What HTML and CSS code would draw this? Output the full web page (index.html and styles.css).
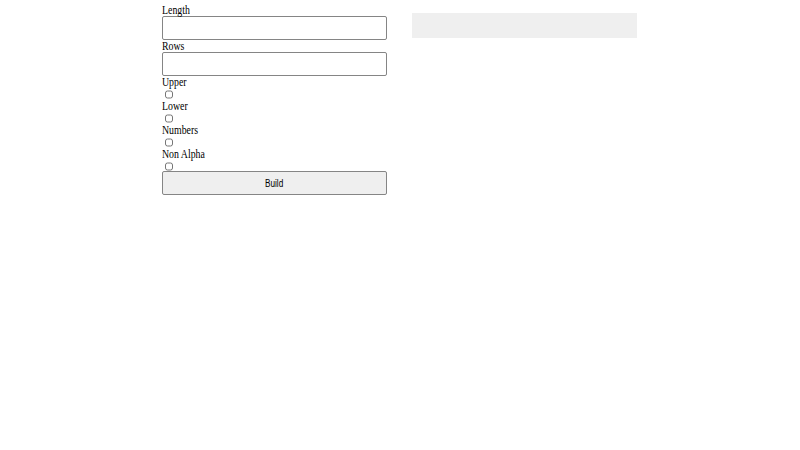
FILE: index.html
```html
<!DOCTYPE html>
<html>
<head>
<meta charset="utf-8">
<link rel="stylesheet" href="styles.css">
</head>
<body>
<div class="page">
  <form class="form">
    <label class="lbl">Length</label>
    <input class="field" type="text">
    <label class="lbl">Rows</label>
    <input class="field" type="text">
    <label class="lbl">Upper</label>
    <input class="check" type="checkbox">
    <label class="lbl">Lower</label>
    <input class="check" type="checkbox">
    <label class="lbl">Numbers</label>
    <input class="check" type="checkbox">
    <label class="lbl">Non Alpha</label>
    <input class="check" type="checkbox">
    <button class="build" type="button"><span class="build-text">Build</span></button>
  </form>
  <pre class="output"></pre>
</div>
</body>
</html>
```

FILE: styles.css
```css
html, body {
  margin: 0;
  padding: 0;
  background: #ffffff;
}
.page {
  width: 476px;
  margin: 0 auto;
  display: flex;
  align-items: flex-start;
  gap: 25px;
  padding-top: 4px;
}
.form {
  width: 225px;
  display: flex;
  flex-direction: column;
  align-items: stretch;
  margin: 0;
}
.lbl {
  font-family: "Liberation Serif", "Times New Roman", serif;
  font-size: 12px;
  line-height: 12px;
  color: #000;
  display: block;
  transform: scaleX(0.82);
  transform-origin: left center;
}
.field {
  box-sizing: border-box;
  height: 24px;
  width: 225px;
  margin: 0;
  border: 1px solid #858585;
  border-radius: 2px;
  background: #fff;
  padding: 0 4px;
}
.check {
  width: 8px;
  height: 9px;
  margin: 2px 0 1px 3px;
  align-self: flex-start;
}
.build {
  box-sizing: border-box;
  height: 24px;
  width: 225px;
  margin: -1px 0 0 0;
  border: 1px solid #858585;
  border-radius: 2px;
  background: #efefef;
  font-family: "Liberation Sans", Arial, sans-serif;
  font-size: 10px;
  color: #000;
}
.build-text {
  display: inline-block;
  transform: scaleX(0.82);
}
.output {
  width: 225px;
  height: 25px;
  margin: 9px 0 0 0;
  background: #efefef;
  box-sizing: border-box;
}
```
